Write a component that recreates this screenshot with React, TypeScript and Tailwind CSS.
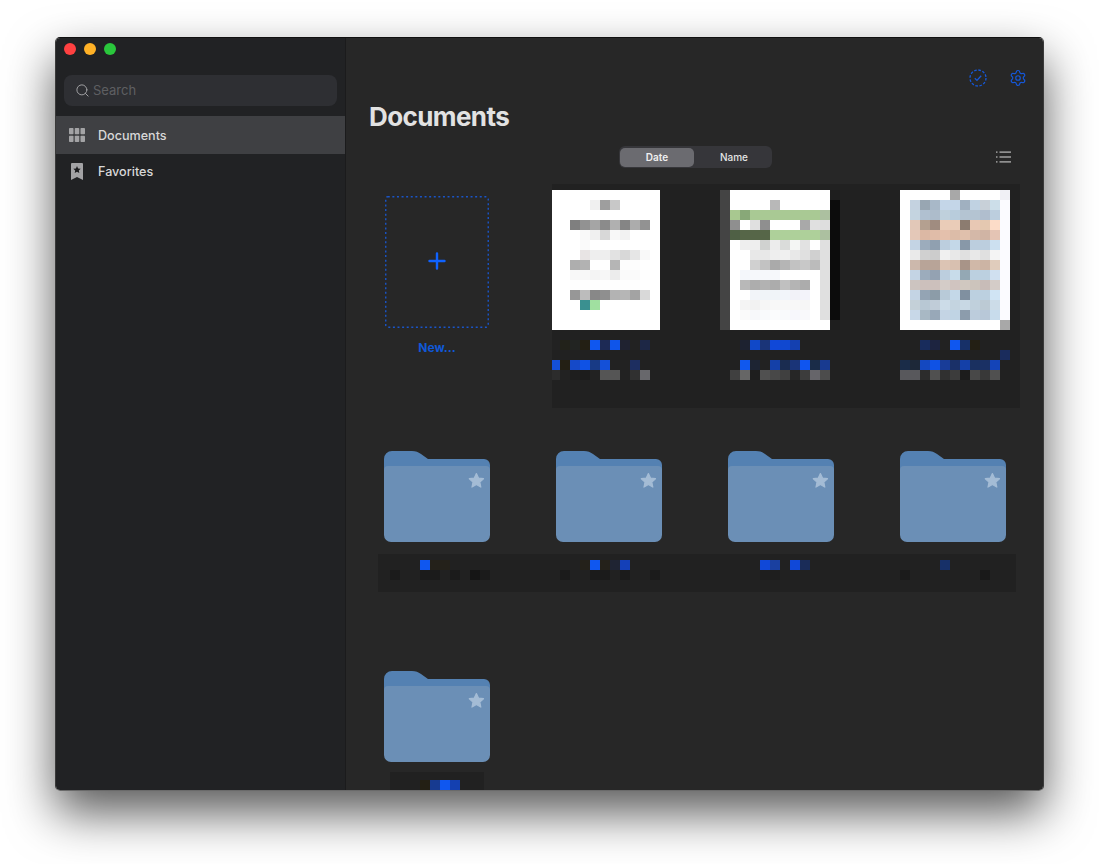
import { Plus, Search, Settings } from 'lucide-react'

type Row = [number, (string | null)[]]

const _ = null
const W = '#ffffff'
const G = '#e0e0e0'

function Mosaic({ rows }: { rows: Row[] }) {
  return (
    <div className="flex flex-col">
      {rows.map(([at, cells], y) => (
        <div key={y} className="flex h-[10px]" style={{ paddingLeft: at * 10 }}>
          {cells.map((color, x) => (
            <div
              key={x}
              className="h-[10px] w-[10px] shrink-0"
              style={{ backgroundColor: color ?? 'transparent' }}
            />
          ))}
        </div>
      ))}
    </div>
  )
}

const doc1Thumb: Row[] = [
  [3, ['#f0f0f0', '#9e9e9e', '#c8c8c8']],
  [0, []],
  [1, ['#7f7f7f', '#929292', '#a5a5a5', '#8b8b8b', '#b0b0b0', '#858585', '#acacac', '#929292']],
  [2, ['#f9f9f9', '#f0f0f0', '#d8d8d8', '#f8f8f8', '#f2f2f2']],
  [2, ['#fafafa']],
  [2, ['#e8e4e4', '#eeeeee', '#eeeeee', '#e2e2e2', '#d8d8d8', '#e6e6e6', '#f9f9f9']],
  [1, ['#aeaeae', '#b2b2b2', _, _, '#b5b5b5', '#fdfdfd', '#fdfdfd']],
  [1, ['#f8f8f8', '#f8f8f8', '#f4f4f4', '#f7f7f7', '#ececec', '#fafafa', '#fafafa', '#fefefe']],
  [1, ['#fefefe', '#fefefe', '#fefefe', '#fefefe', '#fefefe', '#fefefe', '#fefefe']],
  [1, ['#979797', '#bcbcbc', '#888888', '#8f8f8f', '#b3b3b3', '#b6b6b6', '#a3a3a3', '#d9d9d9']],
  [2, ['#3a9090', '#a0e0a0']],
]

const doc1Caption: Row[] = [
  [0, ['#222222', '#22221a', '#222422', '#231f14', '#0f57f0', '#1d2a55', '#0f55ea', '#1f2230', '#222222', '#1d2745']],
  [0, []],
  [0, ['#1450d8', '#231f14', '#1549c8', '#0f52e5', '#183a85', '#1450d8', '#222222', '#222222', '#1d2e60']],
  [0, ['#2c2c2c', '#222222', '#1e1e1e', '#1c1c1c', '#222222', '#555555', '#555555', '#222222', '#303030', '#68686c']],
]

const doc2Thumb: Row[] = [
  [0, []],
  [4, ['#b8b8b8']],
  [0, ['#a8c890', '#88a878', '#a9c994', '#a9c994', '#a9c994', '#a9c994', '#a9c994', '#a9c994', '#a9c994', '#acc0a0']],
  [0, ['#8f8f8f', W, '#e0e0e0', '#8f8f8f', W, W, W, '#a9a9a9', '#e0e0e0', '#dedede']],
  [0, ['#4f6045', '#566648', '#566648', '#566648', '#aed09a', '#aed09a', '#aed09a', '#aed09a', '#aed09a', '#acc0a0']],
  [0, [W, '#eeeeee', '#eeeeee', '#d0d2d0', '#ececec', '#dadcda', '#f4f6f4', '#e2e2e2', W, G]],
  [0, [W, W, '#e8e8e8', '#e8e8e8', '#eeeeee', '#f0f0f0', '#e8e8e8', '#e0e0e0', '#d0d0d0', G]],
  [0, [W, W, '#d0d0d0', '#c2c2c2', '#aaaaaa', '#b5b5b5', '#c2c2c2', '#c8c8c8', '#bbbbbb', G]],
  [0, [W, '#f4f7fb', '#f6f8fb', '#f6f8fb', '#f6f8fb', W, W, W, W, G]],
  [0, [W, '#b8b8b8', '#adadad', '#b2b2b2', '#acacac', '#c0c0c0', '#b4b4b4', '#acacac', W, G]],
  [0, [W, W, '#f2f4f9', '#f0f4f8', '#f0f4f8', '#f2f5fa', '#f2f2f8', '#f3f3fa', W, G]],
  [0, [W, '#f4f4f4', '#f2f2f2', '#f6f6f6', '#f8f8f8', '#f8f8f8', '#f8f8f8', '#f6f6f6', W, G]],
  [0, [W, '#fafafa', '#f7f8fa', '#f9fafc', '#fbfcfd', '#f9fafc', '#f7f7fc', '#f9f9fb', W, G]],
]

const doc2Caption: Row[] = [
  [1, ['#1d2230', '#1048c8', '#1a3478', '#1048d8', '#1048d0', '#1440b0']],
  [0, []],
  [1, ['#1058ee', '#1d2433', '#222222', '#1440a8', '#1a2c50', '#1a3478', '#0f55f0', '#1a2c48', '#183a90']],
  [0, ['#404040', '#666666', '#1e1e1e', '#505050', '#484848', '#404040', '#262626', '#3c3c3c', '#66656a', '#4c4c4c']],
]

const doc3Thumb: Row[] = [
  [5, ['#a8a8a8', _, _, _, _, '#f0f0f5']],
  [1, ['#c4d2e0', '#98a6b2', '#a8b8c8', '#c4d6e8', '#c4d6e8', '#a0b0c0', '#c0d2e2', '#c8d0d8', '#ccdee9', '#fbfbff']],
  [1, ['#c4d4e0', '#b0c0d0', '#adbccb', '#bfd0dc', '#b8ccdc', '#b4c4d2', '#b4c4d2', '#b0bece', '#bccede', '#fbfbff']],
  [1, ['#e2c8b8', '#b4a090', '#a08c80', '#eaccb8', '#eaccb8', '#8c7c70', '#e8c8b4', '#e4c8b0', '#fcdcc8', '#fbfbff']],
  [1, ['#e4c8b8', '#dcb8a4', '#e0bca8', '#e4c0ac', '#dcbca8', '#e0c0ac', '#d4b8a8', '#d0b4a4', '#e4c4b4', '#fbfbff']],
  [1, ['#c4d4e4', '#9cacbc', '#90a0b0', '#bccede', '#c4d8e8', '#8898a8', '#bccede', '#bccede', '#cce0f0', '#fbfbff']],
  [1, ['#eaeaea', '#d0d0d0', '#cccccc', '#f0f0f0', '#e8e8e8', '#e0e0e0', '#e8e8e8', '#e0e0e0', '#f4f4f4', '#fbfbff']],
  [1, ['#ccb8ac', '#b8a498', '#b8a498', '#dcc4b4', '#d8c0b0', '#a89488', '#d0b8a8', '#ccb4a4', '#e0ccbc', '#fbfbff']],
  [1, ['#c4d4e4', '#9cacbc', '#94a2b2', '#bccede', '#c8dcea', '#94a8b4', '#bcd0e0', '#bcd0e0', '#d0e0f0', '#fbfbff']],
  [1, ['#ccc4c0', '#ccc0bc', '#ccc0bc', '#d4ccc8', '#d0c4c0', '#d0c8c0', '#ccc4bc', '#c8bcb8', '#d4ccc8', '#fbfbff']],
  [1, ['#c4d4e4', '#94a4b4', '#8c9ca8', '#b8cad8', '#c4d8e8', '#8090a0', '#bcd0e0', '#bcd0e0', '#d0e4f4', '#fbfbff']],
  [1, ['#c4d0d8', '#b8c8d4', '#c0ccd8', '#ccdce8', '#c4d4e0', '#c8d8e4', '#c0d0dc', '#bccad4', '#ccdce8', '#fbfbff']],
  [1, ['#c8d8e8', '#a8b8c4', '#98a8b8', '#c4d4e4', '#c0d4e4', '#8c9cac', '#bcccdc', '#b8c8d8', '#c8dcec', '#fbfbff']],
  [10, ['#a8a8a8']],
]

const doc3Caption: Row[] = [
  [2, ['#182c5c', '#1d2440', '#222222', '#0f57f0', '#173068', '#231f14']],
  [10, ['#1a2c5c']],
  [0, ['#1a2c48', '#1d2838', '#1448c0', '#0f52e5', '#183c98', '#1a3068', '#1440a8', '#1a3060', '#1a3064', '#1444b8']],
  [0, ['#58585c', '#58585c', '#2c2c2c', '#505050', '#303030', '#3c3c3c', '#1c1c1c', '#484848', '#383838', '#505050']],
]

const D = '#1b1b1b'

const folderCaptions: { width: string; rows: Row[] }[] = [
  {
    width: 'w-[170px]',
    rows: [
      [4, ['#0f57f0', '#24211a', '#24211a']],
      [1, [D, _, _, D, D, _, D, _, '#151515', D]],
    ],
  },
  {
    width: 'w-[200px]',
    rows: [
      [3, ['#24211a', '#0f57f0', '#24211a', '#1f2433', '#1440b8']],
      [1, [D, _, _, D, D, _, D, _, _, D]],
    ],
  },
  {
    width: 'w-[140px]',
    rows: [
      [1, ['#1048d8', '#1a40a0', _, '#1048d8', '#1a2c58']],
      [1, ['#1e1e1e', '#1e1e1e']],
    ],
  },
  {
    width: 'flex-1',
    rows: [
      [5, ['#173068']],
      [1, [D, _, _, _, _, _, _, _, '#191919']],
    ],
  },
]

function Folder() {
  return (
    <svg width="106" height="91" viewBox="0 0 106 91" className="block">
      <path
        d="M0 8a8 8 0 0 1 8-8h20c4 0 6 1 9 3l7 5h56a6 6 0 0 1 6 6v20H0z"
        fill="#5481b2"
      />
      <path
        d="M0 19a4 4 0 0 1 4-4h98a4 4 0 0 1 4 4v65a7 7 0 0 1-7 7H7a7 7 0 0 1-7-7z"
        fill="#6b8fb6"
      />
      <path
        d="M92.4 22.5l2.1 4.6 5 .6-3.7 3.4 1 5-4.4-2.5-4.4 2.5 1-5-3.7-3.4 5-.6z"
        fill="#a4bcd5"
        stroke="#a4bcd5"
        strokeWidth="1.2"
        strokeLinejoin="round"
      />
    </svg>
  )
}

function GridIcon() {
  return (
    <svg width="16" height="14" viewBox="0 0 16 14" fill="#a3a3a5">
      <rect x="0" y="0" width="4.5" height="6.2" rx="0.8" />
      <rect x="5.75" y="0" width="4.5" height="6.2" rx="0.8" />
      <rect x="11.5" y="0" width="4.5" height="6.2" rx="0.8" />
      <rect x="0" y="7.8" width="4.5" height="6.2" rx="0.8" />
      <rect x="5.75" y="7.8" width="4.5" height="6.2" rx="0.8" />
      <rect x="11.5" y="7.8" width="4.5" height="6.2" rx="0.8" />
    </svg>
  )
}

function BookmarkIcon() {
  return (
    <svg width="12" height="17" viewBox="0 0 12 17">
      <path d="M0 1a1 1 0 0 1 1-1h10a1 1 0 0 1 1 1v16l-6-3-6 3z" fill="#a3a3a5" />
      <path
        d="M6 3l1.1 2.4 2.6.3-1.9 1.8.5 2.6L6 8.8l-2.3 1.3.5-2.6-1.9-1.8 2.6-.3z"
        fill="#1c1c1e"
      />
    </svg>
  )
}

function CheckCircleIcon() {
  return (
    <svg width="18" height="18" viewBox="0 0 18 18" fill="none" stroke="#1557d8">
      <circle cx="9" cy="9" r="8" strokeWidth="1.3" strokeDasharray="2.6 1.6" />
      <path d="M5.8 9.2l2.2 2.2 4.2-4.6" strokeWidth="1.3" />
    </svg>
  )
}

function ListIcon() {
  return (
    <svg width="15" height="12" viewBox="0 0 15 12" fill="#bdbdbd">
      <rect x="0" y="0.5" width="1.5" height="1.2" />
      <rect x="3.5" y="0.5" width="11.5" height="1.2" />
      <rect x="0" y="5.4" width="1.5" height="1.2" />
      <rect x="3.5" y="5.4" width="11.5" height="1.2" />
      <rect x="0" y="10.3" width="1.5" height="1.2" />
      <rect x="3.5" y="10.3" width="11.5" height="1.2" />
    </svg>
  )
}

function Sidebar() {
  return (
    <aside className="flex w-[290px] shrink-0 flex-col border-r border-[#1b1b1c] bg-[#212224]">
      <div className="ml-[8px] mt-[5px] flex gap-[8px]">
        <span className="h-[12px] w-[12px] rounded-full bg-[#ff4141]" />
        <span className="h-[12px] w-[12px] rounded-full bg-[#ffb126]" />
        <span className="h-[12px] w-[12px] rounded-full bg-[#2ac73c]" />
      </div>
      <div className="ml-[8px] mr-[8px] mt-[20px] flex h-[31px] items-center gap-[3px] rounded-[8px] bg-[#2e2f33] pl-[11px]">
        <Search size={15} strokeWidth={1.6} color="#a0a0a3" />
        <span className="text-[13px] text-[#5e5f62]">Search</span>
      </div>
      <nav className="mt-[10px] flex flex-col">
        <div className="flex h-[38px] items-center bg-[#3f4043] pl-[13px]">
          <GridIcon />
          <span className="ml-[13px] pt-[2px] text-[12.6px] font-medium text-[#d8d8d8]">Documents</span>
        </div>
        <div className="flex h-[34px] items-center pl-[15px]">
          <BookmarkIcon />
          <span className="ml-[15px] pt-[2px] text-[12.6px] font-medium text-[#d8d8d8]">Favorites</span>
        </div>
      </nav>
    </aside>
  )
}

function Toolbar() {
  return (
    <>
      <div className="mt-[31px] flex h-[18px] items-center justify-end gap-[22px] pr-[16px]">
        <CheckCircleIcon />
        <Settings size={18} strokeWidth={1.6} color="#1557d8" />
      </div>
      <h1 className="ml-[18px] mt-[14px] h-[32px] text-[26px] font-bold leading-[32px] tracking-[-0.6px] text-[#e2e2e2]">
        Documents
      </h1>
      <div className="relative mt-[13px] flex h-[22px] justify-center pl-[2px]">
        <div className="ml-[-5px] flex h-[22px] w-[153px] items-center rounded-[6px] bg-[#36363a] pl-[1px]">
          <div className="flex h-[19px] w-[74px] items-center justify-center rounded-[5px] bg-[#6b6b70] text-[10px] font-semibold text-[#f0f0f0]">
            Date
          </div>
          <div className="flex flex-1 items-center justify-center pl-[2px] text-[10px] font-medium text-[#e4e4e4]">
            Name
          </div>
        </div>
        <div className="absolute right-[32px] top-[5px]">
          <ListIcon />
        </div>
      </div>
    </>
  )
}

function NewCard() {
  return (
    <div className="flex w-[172px] shrink-0 flex-col items-center pt-[12px]">
      <svg width="104" height="132" viewBox="0 0 104 132" fill="none" className="ml-[-1px] block">
        <rect
          x="0.75"
          y="0.75"
          width="102.5"
          height="130.5"
          rx="2"
          stroke="#1a55c8"
          strokeWidth="1.4"
          strokeDasharray="2 2.6"
        />
        <path d="M52 57.5v15M44.5 65h15" stroke="#0f62fe" strokeWidth="2.4" strokeLinecap="round" />
      </svg>
      <span className="mt-[12px] text-[12px] font-bold leading-[16px] text-[#1058d8]">New...</span>
    </div>
  )
}

function DocumentsPanel() {
  return (
    <div className="ml-[29px] flex h-[224px] w-[468px] overflow-hidden bg-[#212121] pt-[6px]">
      <div className="w-[168px] shrink-0">
        <div className="h-[140px] w-[108px] bg-white pl-[8px] pt-[10px]">
          <Mosaic rows={doc1Thumb} />
        </div>
        <div className="ml-[-2px] mt-[10px]">
          <Mosaic rows={doc1Caption} />
        </div>
      </div>
      <div className="w-[180px] shrink-0">
        <div className="flex h-[140px] w-[120px]">
          <div className="w-[10px] bg-[#444444]" />
          <div className="h-[140px] w-[100px] bg-white">
            <Mosaic rows={doc2Thumb} />
          </div>
          <div className="flex w-[10px] flex-col bg-[#1e1e1e]">
            <div className="mt-[10px] h-[120px] bg-[#0c0c0c]" />
          </div>
        </div>
        <div className="ml-[10px] mt-[10px]">
          <Mosaic rows={doc2Caption} />
        </div>
      </div>
      <div className="w-[120px] shrink-0">
        <div className="h-[140px] w-[110px] bg-white">
          <Mosaic rows={doc3Thumb} />
        </div>
        <div className="mt-[10px]">
          <Mosaic rows={doc3Caption} />
        </div>
      </div>
    </div>
  )
}

function FolderRow({ count }: { count: number }) {
  return (
    <div className="flex">
      {Array.from({ length: count }).map((_, i) => (
        <div key={i} className="flex w-[172px] justify-center">
          <Folder />
        </div>
      ))}
    </div>
  )
}

export default function App() {
  return (
    <div className="h-[864px] w-[1099px] overflow-hidden bg-white pl-[55px] pt-[37px] font-[Inter,sans-serif]">
      <div className="flex h-[754px] w-[989px] overflow-hidden rounded-[5px] border border-[#3a3a3a] border-b-[#6a6a6a] border-t-[#111111] shadow-[0_22px_48px_rgba(0,0,0,0.65)]">
        <Sidebar />
        <main className="flex min-w-0 flex-1 flex-col overflow-hidden bg-[#272727] pl-[5px]">
          <Toolbar />
          <div className="mt-[16px] flex shrink-0">
            <NewCard />
            <DocumentsPanel />
          </div>
          <div className="mt-[43px] shrink-0">
            <FolderRow count={4} />
          </div>
          <div className="ml-[27px] mt-[12px] flex h-[38px] w-[638px] shrink-0 bg-[#212121] pl-[2px] pt-[6px]">
            {folderCaptions.map((caption, i) => (
              <div key={i} className={caption.width}>
                <Mosaic rows={caption.rows} />
              </div>
            ))}
          </div>
          <div className="mt-[79px] shrink-0">
            <FolderRow count={1} />
          </div>
          <div className="ml-[39px] mt-[10px] h-[18px] w-[94px] shrink-0 bg-[#212121] pt-[8px]">
            <Mosaic rows={[[3, ['#231f14', '#173a90', '#0f57f0', '#1440b0']]]} />
          </div>
        </main>
      </div>
    </div>
  )
}
